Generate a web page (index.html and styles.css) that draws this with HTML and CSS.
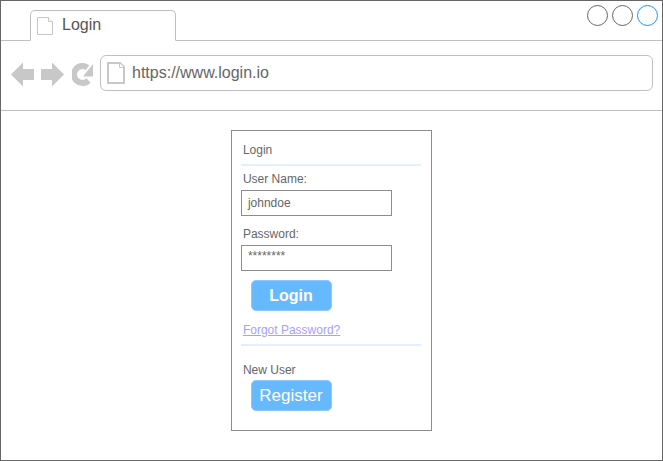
FILE: index.html
```html
<!DOCTYPE html>
<html lang="en">
<head>
<meta charset="utf-8">
<title>Login</title>
<link rel="stylesheet" href="styles.css">
</head>
<body>
<div class="window">
  <header class="chrome">
    <div class="tabbar">
      <div class="tab">
        <svg class="page-icon tab-icon" viewBox="0 0 16 18" aria-hidden="true"><path d="M.5.5H11.500L15.500 4.500V17.500H.5Z" fill="#fff" stroke="#c8c8c8"/><path d="M11.500.5V4.500H15.500" fill="#fff" stroke="#c8c8c8"/></svg>
        <span class="tab-label">Login</span>
      </div>
      <div class="controls">
        <span class="dot"></span><span class="dot"></span><span class="dot dot-blue"></span>
      </div>
    </div>
    <div class="toolbar">
      <div class="nav">
        <svg class="nav-icon" viewBox="0 0 23 25" aria-hidden="true"><path d="M0 12.500 12 .5V7H23V18H12V24.500Z" fill="#c8c8c8"/></svg>
        <svg class="nav-icon" viewBox="0 0 23 25" aria-hidden="true"><path d="M23 12.500 11 .5V7H0V18H11V24.500Z" fill="#c8c8c8"/></svg>
        <svg class="nav-icon reload" viewBox="0 0 22 25" aria-hidden="true"><path d="M16.500 18.500A8.500 8.500 0 1 1 15.500 5.600" fill="none" stroke="#c8c8c8" stroke-width="6"/><path d="M11 14.500 21 2V14.500Z" fill="#c8c8c8"/></svg>
      </div>
      <div class="address">
        <svg class="page-icon addr-icon" viewBox="0 0 18 22" aria-hidden="true"><path d="M1 1H13L17 5V21H1Z" fill="#fff" stroke="#c8c8c8" stroke-width="2"/><path d="M12.500 1V5.500H17" fill="#fff" stroke="#c8c8c8"/></svg>
        <span class="url">https://www.login.io</span>
      </div>
    </div>
  </header>
  <main class="content">
    <section class="card">
      <h1 class="title">Login</h1>
      <hr class="rule">
      <label class="label" for="user">User Name:</label>
      <div class="input" id="user">johndoe</div>
      <label class="label label-pass" for="pass">Password:</label>
      <div class="input input-pass" id="pass">********</div>
      <button class="btn btn-login" type="button">Login</button>
      <a class="forgot" href="#">Forgot Password?</a>
      <hr class="rule rule-2">
      <p class="new-user">New User</p>
      <button class="btn btn-register" type="button">Register</button>
    </section>
  </main>
</div>
</body>
</html>
```
FILE: styles.css
```css
* { box-sizing: border-box; }
html, body { margin: 0; padding: 0; background: #fff; }
body { width: 663px; height: 461px; overflow: hidden; font-family: "Liberation Sans", Arial, sans-serif; color: #666; }
.window { width: 663px; height: 461px; border: 1px solid #666; display: flex; flex-direction: column; }
.chrome { height: 110px; border-bottom: 1px solid #c0c0c0; display: flex; flex-direction: column; flex: none; }
.tabbar { height: 40px; border-bottom: 1px solid #c0c0c0; display: flex; justify-content: space-between; flex: none; }
.tab { width: 146px; height: 31px; margin: 9px 0 -1px 29px; padding-left: 6px; border: 1px solid #c0c0c0; border-bottom: 1px solid #fff; border-radius: 5px 5px 0 0; background: #fff; display: flex; align-items: center; gap: 9px; }
.tab-icon { width: 16px; height: 18px; flex: none; margin-top: 1px; }
.tab-label { font-size: 16px; color: #555; position: relative; top: -1px; }
.controls { display: flex; gap: 4px; padding: 4px 4px 0 0; }
.dot { width: 21px; height: 21px; border: 1px solid #666; border-radius: 50%; }
.dot-blue { border-color: #1e90ff; }
.toolbar { flex: 1; display: flex; align-items: flex-start; padding: 14px 9px 0 10px; }
.nav { display: flex; align-items: center; width: 89px; flex: none; gap: 7px; padding-top: 7px; }
.nav-icon { width: 23px; height: 25px; flex: none; }
.reload { width: 22px; margin-left: 1px; }
.address { flex: 1; height: 36px; border: 1px solid #c0c0c0; border-radius: 6px; display: flex; align-items: center; padding-left: 6px; gap: 7px; }
.addr-icon { width: 18px; height: 22px; flex: none; }
.url { font-size: 16px; color: #666; }
.content { flex: 1; display: flex; justify-content: center; padding: 19px 0 0 0; }
.card { width: 201px; height: 301px; border: 1px solid #8c8c8c; padding: 12px 9px 0 9px; font-size: 12px; margin-right: 1px; }
.title { margin: 0 0 0 2.4px; font-size: 12px; font-weight: normal; line-height: 14px; }
.rule { margin: 7px 1px 0 0; height: 2px; border: 0; background: #e1efff; }
.label { display: block; margin: 6px 0 0 2.4px; line-height: 14px; }
.label-pass { margin-top: 11px; }
.input { width: 151px; height: 26px; margin-top: 4px; border: 1px solid #8c8c8c; padding-left: 6.400px; line-height: 24px; color: #666; font-size: 12px; }
.input-pass { line-height: 21px; }
.btn { display: block; width: 81px; height: 31px; margin-left: 10px; padding: 0; border: 1px solid #8cc8ff; border-radius: 5px; background: #66b8ff; color: #fff; font-family: inherit; }
.btn-login { margin-top: 9px; font-size: 16px; font-weight: bold; }
.forgot { display: block; margin: 12px 0 0 2.4px; color: #a3a0ff; line-height: 14px; text-decoration: underline; }
.rule-2 { margin-top: 7px; }
.new-user { margin: 17px 0 0 2.4px; line-height: 14px; }
.btn-register { margin-top: 3px; font-size: 17px; }
```
